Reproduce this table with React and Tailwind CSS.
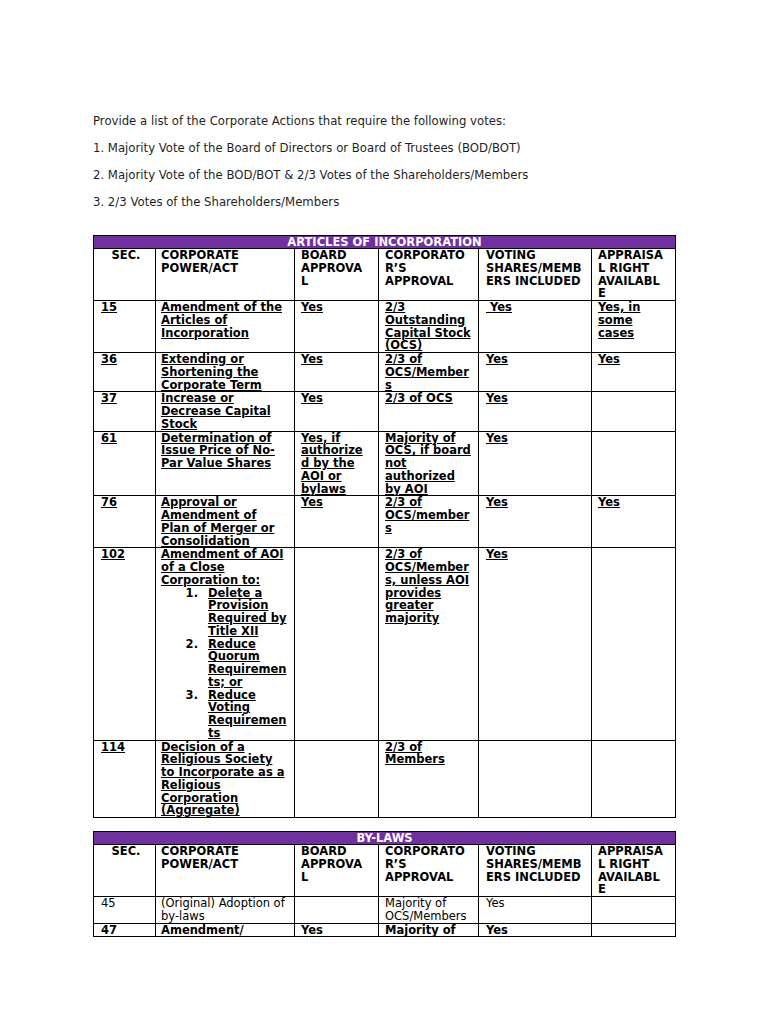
import React from "react";

const pads = [
  "pl-[7px] pr-[4px]",
  "pl-[5px] pr-[6px]",
  "pl-[6px] pr-[10px]",
  "pl-[6px] pr-[6.5px]",
  "pl-[7px] pr-[8px]",
  "pl-[6px] pr-[9px]",
];

const headers = [
  "SEC.",
  "CORPORATE POWER/ACT",
  "BOARD APPROVAL",
  "CORPORATOR’S APPROVAL",
  "VOTING SHARES/MEMBERS INCLUDED",
  "APPRAISAL RIGHT AVAILABLE",
];

const articles = [
  ["15", "Amendment of the Articles of Incorporation", "Yes", "2/3 Outstanding Capital Stock (OCS)", "\u00a0Yes", "Yes, in some cases"],
  ["36", "Extending or Shortening the Corporate Term", "Yes", "2/3 of OCS/Members", "Yes", "Yes"],
  ["37", "Increase or Decrease Capital Stock", "Yes", "2/3 of OCS", "Yes", ""],
  ["61", "Determination of Issue Price of No-Par Value Shares", "Yes, if authorized by the AOI or bylaws", "Majority of OCS, if board not authorized by AOI", "Yes", ""],
  ["76", "Approval or Amendment of Plan of Merger or Consolidation", "Yes", "2/3 of OCS/members", "Yes", "Yes"],
  ["102", "close", "", "2/3 of OCS/Members, unless AOI provides greater majority", "Yes", ""],
  ["114", "Decision of a Religious Society to Incorporate as a Religious Corporation (Aggregate)", "", "2/3 of Members", "", ""],
];

const closeItems = [
  "Delete a Provision Required by Title XII",
  "Reduce Quorum Requirements; or",
  "Reduce Voting Requirements",
];

const Cell = ({ i, children, className = "" }) => (
  <td className={`border border-black align-top py-0 ${pads[i]} ${className}`}>
    {children}
  </td>
);

const CloseCorp = () => (
  <div>
    <span className="underline">Amendment of AOI of a Close Corporation to:</span>
    {closeItems.map((t, n) => (
      <div key={n} className="flex">
        <span className="w-[47px] shrink-0 text-right pr-[10px]">{n + 1}.</span>
        <span className="underline min-w-0">{t}</span>
      </div>
    ))}
  </div>
);

const Head = ({ title }) => (
  <thead>
    <tr>
      <th
        colSpan={6}
        className="border border-black bg-[#7030a0] text-white text-center font-bold leading-[12px] h-[12px] p-0"
      >
        {title}
      </th>
    </tr>
    <tr>
      {headers.map((h, i) => (
        <th
          key={i}
          className={`border border-black align-top py-0 font-bold ${pads[i]} ${
            i === 0 ? "text-center" : "text-left"
          }`}
        >
          {h}
        </th>
      ))}
    </tr>
  </thead>
);

const Cols = () => (
  <colgroup>
    <col className="w-[62px]" />
    <col className="w-[139px]" />
    <col className="w-[84px]" />
    <col className="w-[100px]" />
    <col className="w-[113px]" />
    <col className="w-[84px]" />
  </colgroup>
);

const tableCls =
  "table-fixed border-collapse w-[582px] text-[11.5px] leading-[12.75px] text-black [overflow-wrap:anywhere]";

export default function App() {
  return (
    <div className="min-h-[1024px] bg-white font-['DejaVu_Sans',sans-serif] pl-[93px] pt-[108px]">
      <div className="text-[11.7px] leading-[27px] text-[#1f1f1f]">
        <p>Provide a list of the Corporate Actions that require the following votes:</p>
        <p>1. Majority Vote of the Board of Directors or Board of Trustees (BOD/BOT)</p>
        <p>2. Majority Vote of the BOD/BOT &amp; 2/3 Votes of the Shareholders/Members</p>
        <p>3. 2/3 Votes of the Shareholders/Members</p>
      </div>

      <table className={`${tableCls} mt-[19px]`}>
        <Cols />
        <Head title="ARTICLES OF INCORPORATION" />
        <tbody className="font-bold">
          {articles.map((row) => (
            <tr key={row[0]}>
              {row.map((c, i) => (
                <Cell key={i} i={i}>
                  {c === "close" ? <CloseCorp /> : <span className="underline">{c}</span>}
                </Cell>
              ))}
            </tr>
          ))}
        </tbody>
      </table>

      <table className={`${tableCls} mt-[13px]`}>
        <Cols />
        <Head title="BY-LAWS" />
        <tbody>
          <tr>
            <Cell i={0}>45</Cell>
            <Cell i={1}>(Original) Adoption of by-laws</Cell>
            <Cell i={2}></Cell>
            <Cell i={3}>Majority of OCS/Members</Cell>
            <Cell i={4}>Yes</Cell>
            <Cell i={5}></Cell>
          </tr>
          <tr className="font-bold">
            <Cell i={0}>47</Cell>
            <Cell i={1}>Amendment/</Cell>
            <Cell i={2}>Yes</Cell>
            <Cell i={3}>Majority of</Cell>
            <Cell i={4}>Yes</Cell>
            <Cell i={5}></Cell>
          </tr>
        </tbody>
      </table>
    </div>
  );
}
